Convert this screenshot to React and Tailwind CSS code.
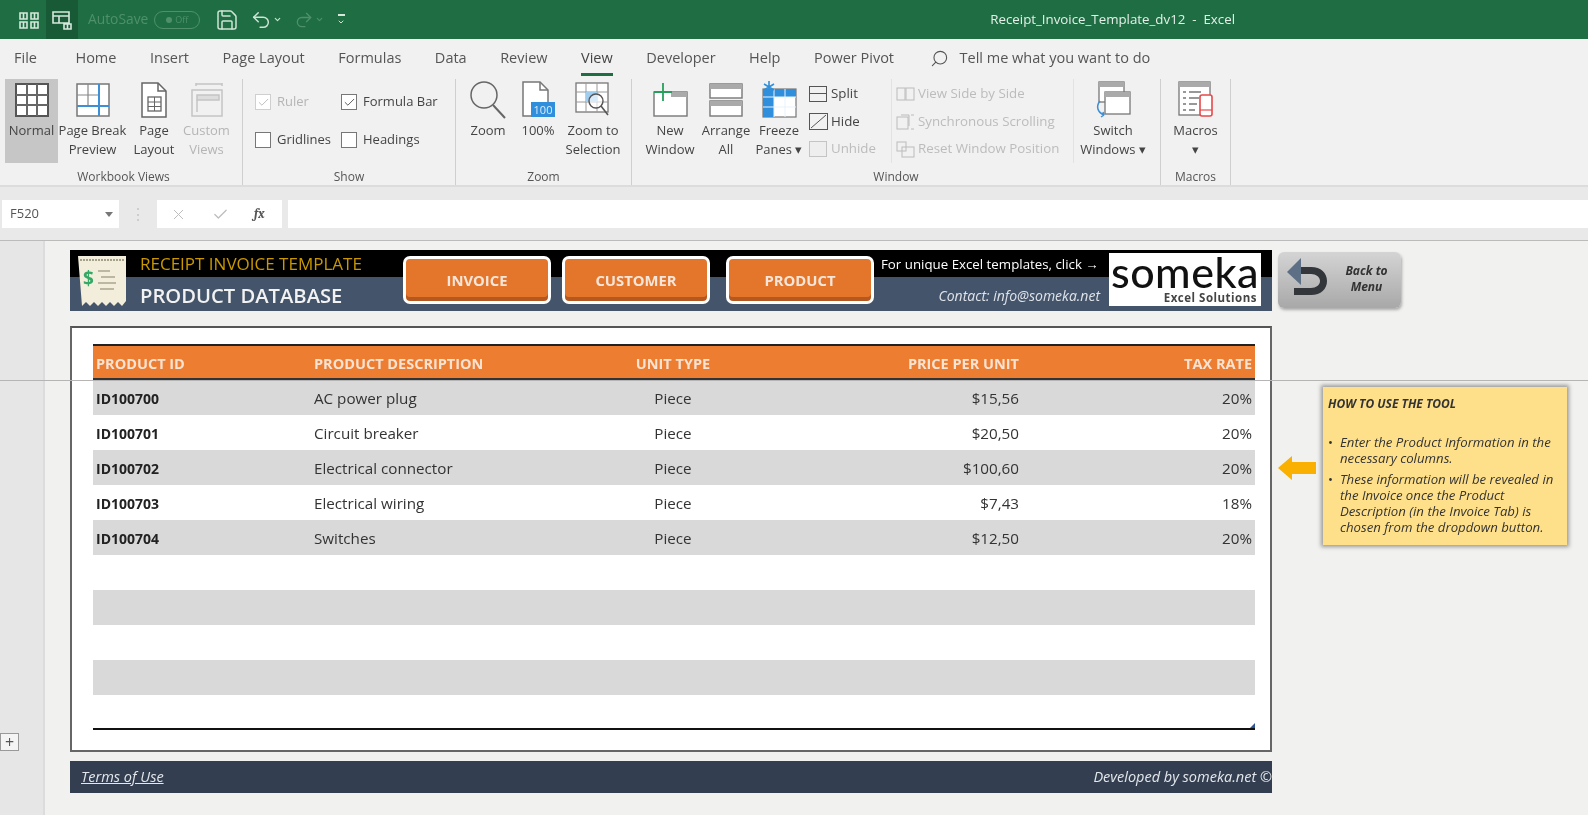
import React from "react";
import { Save, Undo2, Redo2, Search, X, Check, ChevronDown } from "lucide-react";

const font = { fontFamily: '"Open Sans", "Noto Sans", sans-serif' };

const tabs = ["File", "Home", "Insert", "Page Layout", "Formulas", "Data", "Review", "View", "Developer", "Help", "Power Pivot"];

const products = [
  ["ID100700", "AC power plug", "Piece", "$15,56", "20%"],
  ["ID100701", "Circuit breaker", "Piece", "$20,50", "20%"],
  ["ID100702", "Electrical connector", "Piece", "$100,60", "20%"],
  ["ID100703", "Electrical wiring", "Piece", "$7,43", "18%"],
  ["ID100704", "Switches", "Piece", "$12,50", "20%"],
  [],
  [],
  [],
  [],
  [],
];

function GridIcon({ active }) {
  return (
    <svg width="36" height="36" viewBox="0 0 36 36" fill="none">
      <rect x="2" y="2" width="32" height="32" fill="#fff" stroke="#555" strokeWidth="2" />
      <path d="M13 2v32M23 2v32M2 13h32M2 23h32" stroke={active ? "#666" : "#888"} strokeWidth="2" />
    </svg>
  );
}

function PageBreakIcon() {
  return (
    <svg width="36" height="36" viewBox="0 0 36 36" fill="none">
      <rect x="2" y="2" width="32" height="32" fill="#fff" stroke="#777" strokeWidth="1.5" />
      <path d="M13 2v22M2 13h22" stroke="#888" strokeWidth="1.2" />
      <path d="M24 2v32M2 24h32" stroke="#3d8fd6" strokeWidth="2" />
    </svg>
  );
}

function PageIcon() {
  return (
    <svg width="30" height="36" viewBox="0 0 30 36" fill="none">
      <path d="M3 1h16l8 8v26H3z" fill="#fff" stroke="#666" strokeWidth="1.5" />
      <path d="M19 1v8h8" stroke="#666" strokeWidth="1.5" />
      <rect x="9" y="15" width="13" height="14" stroke="#666" strokeWidth="1.3" />
      <path d="M9 20h13M9 24.500h13M15.500 15v14" stroke="#666" strokeWidth="1" />
    </svg>
  );
}

function CustomViewsIcon() {
  return (
    <svg width="36" height="36" viewBox="0 0 36 36" fill="none" stroke="#c4c4c4" strokeWidth="1.5">
      <path d="M7 2h26M7 1v3M33 1v3" />
      <rect x="3" y="8" width="30" height="26" />
      <rect x="8" y="13" width="22" height="5" fill="#ddd" />
      <path d="M8 18v12" />
    </svg>
  );
}

function ZoomIcon() {
  return (
    <svg width="38" height="40" viewBox="0 0 38 40" fill="none" stroke="#666" strokeWidth="1.5">
      <circle cx="15" cy="15" r="13" />
      <path d="M24 25l12 13" strokeWidth="2" />
    </svg>
  );
}

function HundredIcon() {
  return (
    <svg width="36" height="38" viewBox="0 0 36 38" fill="none">
      <path d="M3 1h17l8 8v26H3z" fill="#fff" stroke="#777" strokeWidth="1.5" />
      <path d="M20 1v8h8" stroke="#777" strokeWidth="1.5" />
      <rect x="11" y="21" width="24" height="15" fill="#2f8fdc" />
      <text x="23" y="33" textAnchor="middle" fontSize="11" fill="#dcedfb" style={font}>100</text>
    </svg>
  );
}

function ZoomSelectionIcon() {
  return (
    <svg width="36" height="38" viewBox="0 0 36 38" fill="none">
      <rect x="1" y="2" width="32" height="29" fill="#fff" stroke="#777" strokeWidth="1.3" />
      <path d="M1 11h32M1 21h32M11 2v29M22 2v29" stroke="#999" />
      <rect x="11" y="11" width="11" height="10" fill="#9fcdf0" />
      <circle cx="21" cy="20" r="7" fill="#fff" fillOpacity=".6" stroke="#555" strokeWidth="1.4" />
      <path d="M26 25l7 9" stroke="#555" strokeWidth="1.6" />
    </svg>
  );
}

function NewWindowIcon() {
  return (
    <svg width="38" height="36" viewBox="0 0 38 36" fill="none">
      <rect x="3" y="10" width="33" height="24" fill="#fff" stroke="#777" strokeWidth="1.4" />
      <rect x="20" y="10" width="16" height="5" fill="#aaa" />
      <path d="M12 1v18M3 10h18" stroke="#25a05a" strokeWidth="1.8" />
    </svg>
  );
}

function ArrangeIcon() {
  return (
    <svg width="34" height="36" viewBox="0 0 34 36" fill="none">
      <rect x="1" y="2" width="32" height="14" fill="#fff" stroke="#777" strokeWidth="1.4" />
      <rect x="1" y="2" width="32" height="5" fill="#aaa" />
      <rect x="1" y="19" width="32" height="15" fill="#fff" stroke="#777" strokeWidth="1.4" />
      <rect x="1" y="19" width="32" height="5" fill="#aaa" />
    </svg>
  );
}

function FreezeIcon() {
  return (
    <svg width="36" height="38" viewBox="0 0 36 38" fill="none">
      <rect x="2" y="8" width="33" height="28" fill="#fff" stroke="#777" strokeWidth="1.2" />
      <rect x="2" y="8" width="33" height="8" fill="#2f8fdc" />
      <rect x="2" y="8" width="11" height="28" fill="#2f8fdc" />
      <path d="M13 8v28M24 8v28M2 16h33M2 26h33" stroke="#e8f3fb" strokeWidth="1" />
      <path d="M8 0v12M3 3l10 6M13 3L3 9" stroke="#2f8fdc" strokeWidth="1.6" />
    </svg>
  );
}

function SwitchIcon() {
  return (
    <svg width="36" height="38" viewBox="0 0 36 38" fill="none">
      <rect x="4" y="1" width="25" height="20" fill="#fff" stroke="#777" strokeWidth="1.3" />
      <rect x="4" y="1" width="25" height="5" fill="#aaa" />
      <rect x="10" y="11" width="25" height="22" fill="#fff" stroke="#777" strokeWidth="1.3" />
      <rect x="10" y="11" width="25" height="5" fill="#aaa" />
      <path d="M5 20c-4 5-3 11 4 14M9 34l-3 2M9 34l-1-3" stroke="#3d8fd6" strokeWidth="1.5" />
    </svg>
  );
}

function MacrosIcon() {
  return (
    <svg width="38" height="38" viewBox="0 0 38 38" fill="none">
      <rect x="2" y="1" width="31" height="33" fill="#fff" stroke="#777" strokeWidth="1.3" />
      <rect x="2" y="1" width="31" height="5" fill="#aaa" />
      <path d="M6 11h3M12 11h12M6 17h3M12 17h10M6 23h3M12 23h8M6 29h3M12 29h6" stroke="#777" strokeWidth="1.3" />
      <rect x="23" y="14" width="12" height="21" rx="2" fill="#fff" stroke="#e8484a" strokeWidth="1.6" />
      <path d="M23 29h12" stroke="#e8484a" strokeWidth="1.2" />
    </svg>
  );
}

function ReceiptIcon() {
  return (
    <svg width="52" height="54" viewBox="0 0 52 54" fill="none">
      <path d="M2 2h48v45l-4 5-4-4-4 4-4-4-4 4-4-4-4 4-4-4-4 4-4-4-4 4z" fill="#f2eedb" />
      <path d="M4 6h44" stroke="#8a8a70" strokeWidth="1.5" strokeDasharray="2 1" />
      <text x="7" y="31" fontSize="19" fontWeight="700" fill="#35a866" style={font}>$</text>
      <path d="M22 17h12M25 23h14M22 29h18M24 35h14" stroke="#a9a58e" strokeWidth="1.3" />
    </svg>
  );
}

function BackArrow() {
  return (
    <svg width="46" height="46" viewBox="0 0 46 46" fill="none">
      <path d="M15 1L1 15l14 13z" fill="#5d6f85" />
      <path d="M15 10h10c10 0 16 6 16 14s-6 14-16 14H8v-7h17c5 0 9-3 9-7s-4-7-9-7H15z" fill="#33373c" />
    </svg>
  );
}

function BigButton({ icon, lines, width, active, muted }) {
  return (
    <div
      className={`flex flex-col items-center h-[84px] pt-[1px] shrink-0 ${active ? "bg-[#c6c6c6]" : ""}`}
      style={{ width }}
    >
      <div className="h-[40px] flex items-center justify-center">{icon}</div>
      <div className={`text-[13px] leading-[19px] text-center whitespace-nowrap mt-[1px] ${muted ? "text-[#b5b5b5]" : "text-[#444]"}`}>
        {lines.map((line) => (
          <div key={line}>{line}</div>
        ))}
      </div>
    </div>
  );
}

function CheckItem({ label, checked, muted, className }) {
  return (
    <div className={`flex items-center gap-[6px] text-[13px] ${muted ? "text-[#b5b5b5]" : "text-[#444]"} ${className}`}>
      <span className={`w-[16px] h-[16px] border flex items-center justify-center bg-white ${muted ? "border-[#cfcfcf]" : "border-[#777]"}`}>
        {checked && <Check size={13} strokeWidth={1.6} />}
      </span>
      {label}
    </div>
  );
}

function Group({ label, width, children }) {
  return (
    <div className="flex flex-col border-r border-[#cfcfcf] h-[106px] shrink-0" style={{ width }}>
      <div className="flex-1 flex">{children}</div>
      <div className="text-[12px] leading-[16px] text-center text-[#555]">{label}</div>
    </div>
  );
}

function SmallRow({ icon, label, muted }) {
  return (
    <div className={`flex items-center gap-[3px] h-[28px] text-[13.300px] whitespace-nowrap ${muted ? "text-[#bcbcbc]" : "text-[#444]"}`}>
      <span className="w-[20px] h-[20px] flex items-center justify-center">{icon}</span>
      {label}
    </div>
  );
}

function Ribbon() {
  return (
    <div className="h-[108px] pl-[5px] pt-[2px] flex bg-[#f1f1f1]">
      <Group label="Workbook Views" width={238}>
        <BigButton active width={53} icon={<GridIcon active />} lines={["Normal"]} />
        <BigButton width={69} icon={<PageBreakIcon />} lines={["Page Break", "Preview"]} />
        <BigButton width={54} icon={<PageIcon />} lines={["Page", "Layout"]} />
        <BigButton muted width={51} icon={<CustomViewsIcon />} lines={["Custom", "Views"]} />
      </Group>
      <Group label="Show" width={213}>
        <div className="grid grid-cols-[86px_1fr] grid-rows-[38px_37px] pl-[12px] pt-[4px] items-center">
          <CheckItem muted checked label="Ruler" />
          <CheckItem checked label="Formula Bar" />
          <CheckItem label="Gridlines" />
          <CheckItem label="Headings" />
        </div>
      </Group>
      <Group label="Zoom" width={176}>
        <div className="w-[6px]" />
        <BigButton width={52} icon={<ZoomIcon />} lines={["Zoom"]} />
        <BigButton width={48} icon={<HundredIcon />} lines={["100%"]} />
        <BigButton width={62} icon={<ZoomSelectionIcon />} lines={["Zoom to", "Selection"]} />
      </Group>
      <Group label="Window" width={529}>
        <div className="w-[8px]" />
        <BigButton width={60} icon={<NewWindowIcon />} lines={["New", "Window"]} />
        <BigButton width={52} icon={<ArrangeIcon />} lines={["Arrange", "All"]} />
        <BigButton width={54} icon={<FreezeIcon />} lines={["Freeze", "Panes ▾"]} />
        <div className="flex flex-col pt-[1px] w-[84px] border-r border-[#e2e2e2] h-[84px] ml-[2px]">
          <SmallRow label="Split" icon={<span className="w-[18px] h-[16px] border border-[#555] flex items-center"><span className="w-full border-t border-[#555]" /></span>} />
          <SmallRow label="Hide" icon={<svg width="19" height="17" viewBox="0 0 19 17" fill="none" stroke="#555"><rect x=".5" y=".5" width="18" height="16" /><path d="M2 15L17 2" /></svg>} />
          <SmallRow muted label="Unhide" icon={<span className="w-[18px] h-[16px] border border-[#c4c4c4] bg-[#eee]" />} />
        </div>
        <div className="flex flex-col pt-[1px] w-[182px] border-r border-[#e2e2e2] h-[84px] pl-[3px]">
          <SmallRow muted label="View Side by Side" icon={<svg width="19" height="16" viewBox="0 0 19 16" fill="none" stroke="#bbb"><rect x="1" y="2" width="8" height="12" /><rect x="10" y="2" width="8" height="12" /></svg>} />
          <SmallRow muted label="Synchronous Scrolling" icon={<svg width="19" height="18" viewBox="0 0 19 18" fill="none" stroke="#bbb"><rect x="1" y="4" width="11" height="12" /><path d="M5 2h8v11M15 2h3M15 16h3" /></svg>} />
          <SmallRow muted label="Reset Window Position" icon={<svg width="19" height="18" viewBox="0 0 19 18" fill="none" stroke="#bbb"><rect x="1" y="2" width="9" height="9" /><rect x="6" y="7" width="12" height="10" /></svg>} />
        </div>
        <BigButton width={78} icon={<SwitchIcon />} lines={["Switch", "Windows ▾"]} />
      </Group>
      <Group label="Macros" width={70}>
        <BigButton width={69} icon={<MacrosIcon />} lines={["Macros", "▾"]} />
      </Group>
    </div>
  );
}

function OrangeButton({ label, className }) {
  return (
    <div className={`w-[148px] h-[48px] rounded-[7px] border-[3px] border-white bg-[#e4762c] shadow-[inset_0_-4px_0_#b5581f] flex items-center justify-center text-[14.800px] font-bold text-[#f6e6da] ${className}`}>
      {label}
    </div>
  );
}

function ProductTable() {
  return (
    <div className="h-[426px] mt-[15px] bg-white border-2 border-[#666] border-t-[#555] pl-[21px] pr-[15px] pt-[16px]">
      <div className="grid grid-cols-[221px_277px_164px_269px_1fr] h-[36px] pt-[3px] items-center bg-[#ed7d31] border-t-2 border-t-[#222] border-b-2 border-b-[#333] text-[14.500px] font-bold text-[#fbe3d3]">
        <div className="pl-[3px]">PRODUCT ID</div>
        <div>PRODUCT DESCRIPTION</div>
        <div className="text-center">UNIT TYPE</div>
        <div className="text-right pr-[5px]">PRICE PER UNIT</div>
        <div className="text-right pr-[3px]">TAX RATE</div>
      </div>
      <div className="relative border-b-2 border-b-[#111]">
        {products.map((row, i) => (
          <div
            key={i}
            className={`grid grid-cols-[221px_277px_164px_269px_1fr] items-center pt-[1px] text-[15.200px] text-[#333] ${i === 9 ? "h-[33px]" : "h-[35px]"} ${i % 2 === 0 ? "bg-[#d9d9d9]" : "bg-white"}`}
          >
            <div className="pl-[3px] font-bold text-[14px] text-[#222]">{row[0]}</div>
            <div>{row[1]}</div>
            <div className="text-center">{row[2]}</div>
            <div className="text-right pr-[5px]">{row[3]}</div>
            <div className="text-right pr-[3px]">{row[4]}</div>
          </div>
        ))}
        <div className="absolute right-0 bottom-0 w-0 h-0 border-l-[5px] border-l-transparent border-b-[5px] border-b-[#2f5597]" />
      </div>
    </div>
  );
}

function HowToNote() {
  return (
    <div className="w-[244px] h-[158px] bg-[#ffe08a] shadow-[0_0_4px_2px_#9a9a9a] px-[5px] pt-[9px] text-[13.200px] leading-[16px] italic text-[#333]">
      <div className="font-bold text-[12px]">HOW TO USE THE TOOL</div>
      <ul className="mt-[22px] flex flex-col gap-[5px]">
        <li className="flex gap-[7px]">
          <span className="not-italic">•</span>
          <span>Enter the Product Information in the necessary columns.</span>
        </li>
        <li className="flex gap-[7px]">
          <span className="not-italic">•</span>
          <span>These information will be revealed in the Invoice once the Product Description (in the Invoice Tab) is chosen from the dropdown button.</span>
        </li>
      </ul>
    </div>
  );
}

export default function App() {
  return (
    <div className="w-[1588px] h-[815px] overflow-hidden flex flex-col bg-[#f1f1ef] blur-[0.6px]" style={font}>
      {/* Title bar */}
      <div className="h-[39px] shrink-0 bg-[#1f6e43] flex items-center text-[#cfe3d6]">
        <div className="w-[46px] h-[39px] flex items-center justify-center pl-[12px]">
          <svg width="22" height="20" viewBox="0 0 22 20" fill="none" stroke="#d6e8dc" strokeWidth="1.6">
            <path d="M2 3h7v6H2zM13 3h7v6h-7zM2 12h7v6H2zM13 12h7v6h-7zM5.500 3v6M16.500 3v6M5.500 12v6M16.500 12v6" />
          </svg>
        </div>
        <div className="w-[32px] h-[39px] bg-[#175a35] flex items-center justify-center">
          <svg width="22" height="20" viewBox="0 0 22 20" fill="none" stroke="#d6e8dc" strokeWidth="1.6">
            <path d="M2 2h16v11H2zM2 6h16M8 6v7M13 14h7v5h-7zM16.500 14v5" />
          </svg>
        </div>
        <span className="ml-[10px] text-[13.800px] text-[#4f9069]">AutoSave</span>
        <span className="ml-[6px] w-[46px] h-[18px] rounded-full border border-[#4f9069] text-[9px] text-[#4f9069] flex items-center justify-center gap-[3px]">
          <span className="w-[6px] h-[6px] bg-[#4f9069] rounded-full" />
          Off
        </span>
        <Save className="ml-[15px]" size={24} strokeWidth={1.5} />
        <Undo2 className="ml-[11px]" size={22} strokeWidth={1.6} />
        <ChevronDown className="ml-[1px]" size={9} strokeWidth={3} />
        <Redo2 className="ml-[12px] text-[#4f9069]" size={20} strokeWidth={1.6} />
        <ChevronDown className="ml-[1px] text-[#4f9069]" size={9} strokeWidth={3} />
        <div className="ml-[13px] flex flex-col items-center gap-[2px]">
          <span className="w-[7px] border-t-2 border-[#d6e8dc]" />
          <ChevronDown size={8} strokeWidth={3} />
        </div>
        <span className="ml-auto mr-[353px] text-[13.300px] text-[#e4efe8]">Receipt_Invoice_Template_dv12&nbsp; -&nbsp; Excel</span>
      </div>

      {/* Tabs */}
      <div className="h-[38px] shrink-0 bg-[#f1f1f1] flex items-center pl-[14px] gap-[33.500px] text-[14.500px] text-[#555]">
        {tabs.map((tab) => (
          <div key={tab} className={`relative ${tab === "File" ? "mr-[5px]" : ""} ${tab === "View" ? "font-medium text-[#444]" : ""}`}>
            {tab}
            {tab === "View" && <span className="absolute left-0 right-0 -bottom-[7px] h-[3px] bg-[#1f6e43]" />}
          </div>
        ))}
        <div className="flex items-center gap-[11px] ml-[2px]">
          <Search className="-scale-x-100" size={19} strokeWidth={1.4} />
          Tell me what you want to do
        </div>
      </div>

      <Ribbon />

      {/* Formula bar */}
      <div className="h-[55px] shrink-0 bg-[#e9e9e9] border-t-2 border-t-[#dcdcdc] pt-[13px] flex">
        <div className="ml-[2px] w-[117px] h-[28px] bg-white flex items-center justify-between pl-[8px] pr-[6px] text-[13px] text-[#555]">
          F520
          <span className="w-0 h-0 border-x-[4px] border-x-transparent border-t-[5px] border-t-[#777]" />
        </div>
        <div className="w-[38px] flex items-center justify-center text-[#c8c8c8] h-[28px]">⋮</div>
        <div className="w-[125px] h-[28px] bg-white flex items-center pl-[13px] gap-[25px] text-[#bdbdbd]">
          <X size={17} strokeWidth={1.4} />
          <Check size={17} strokeWidth={1.8} />
          <span className="text-[13px] italic font-bold text-[#555] font-serif">fx</span>
        </div>
        <div className="ml-[6px] flex-1 h-[28px] bg-white" />
      </div>

      {/* Sheet */}
      <div className="relative flex-1 flex border-t border-t-[#bbb]">
        <div className="w-[45px] shrink-0 bg-[#e6e6e6] border-r-2 border-r-[#dcdcdc] relative">
          <div className="absolute left-0 top-[492px] w-[19px] h-[18px] border border-[#999] bg-[#f4f4f4] flex items-center justify-center text-[16px] leading-none text-[#555]">+</div>
        </div>
        <div className="w-[1202px] ml-[25px] pt-[9px]">
          <div className="h-[61px] flex bg-[linear-gradient(#000_44%,#44546a_44%)]">
            <div className="pl-[6px] pt-[4px] w-[70px]">
              <ReceiptIcon />
            </div>
            <div className="w-[263px]">
              <div className="text-[17px] leading-[27px] font-medium text-[#c99700] whitespace-nowrap">RECEIPT INVOICE TEMPLATE</div>
              <div className="text-[20.200px] leading-[37px] font-semibold text-[#f2f2f2] whitespace-nowrap">PRODUCT DATABASE</div>
            </div>
            <div className="flex gap-[11px] pt-[6px]">
              <OrangeButton label="INVOICE" />
              <OrangeButton label="CUSTOMER" />
              <OrangeButton label="PRODUCT" className="ml-[5px]" />
            </div>
            <div className="w-[235px] pl-[7px] flex flex-col">
              <div className="h-[29px] flex items-center text-[13.300px] text-white whitespace-nowrap">For unique Excel templates, click →</div>
              <div className="h-[32px] flex items-center justify-end pr-[9px] pt-[1px] text-[14px] italic text-[#dfe3ea] whitespace-nowrap">Contact: info@someka.net</div>
            </div>
            <div className="w-[152px] h-[53px] mt-[3px] bg-white flex flex-col items-center text-[#111]">
              <div className="text-[43px] leading-[38px] tracking-[0.5px] font-medium" style={{ fontFamily: '"Lato", sans-serif' }}>someka</div>
              <div className="self-end pr-[4px] text-[11.500px] leading-[14px] font-bold text-[#444] tracking-[0.5px]">Excel Solutions</div>
            </div>
          </div>
          <ProductTable />
          <div className="h-[32px] mt-[9px] bg-[#333f50] flex items-center justify-between pl-[11px] text-[14.500px] italic text-[#e4e7ec]">
            <span className="underline">Terms of Use</span>
            <span className="whitespace-nowrap">Developed by someka.net ©</span>
          </div>
        </div>

        <div className="ml-[6px] pt-[11px]">
          <div className="w-[123px] h-[56px] rounded-[6px] bg-[linear-gradient(#d4d4d4,#bcbcbc_55%,#a8a8a8)] shadow-[1px_2px_3px_#aaa] flex items-center pl-[8px]">
            <BackArrow />
            <div className="flex-1 text-center text-[12px] leading-[16px] font-bold italic text-[#333] -mt-[3px]">
              Back to
              <br />
              Menu
            </div>
          </div>
          <div className="flex mt-[79px]">
            <svg className="mt-[69px] mr-[7px] shrink-0" width="38" height="24" viewBox="0 0 38 24" fill="#f9b000">
              <path d="M0 12L14 0v6h24v12H14v6z" />
            </svg>
            <HowToNote />
          </div>
        </div>

        {/* freeze pane line */}
        <div className="absolute left-0 right-0 top-[139px] h-[1px] bg-[#b5b5b5]" />
      </div>
    </div>
  );
}
